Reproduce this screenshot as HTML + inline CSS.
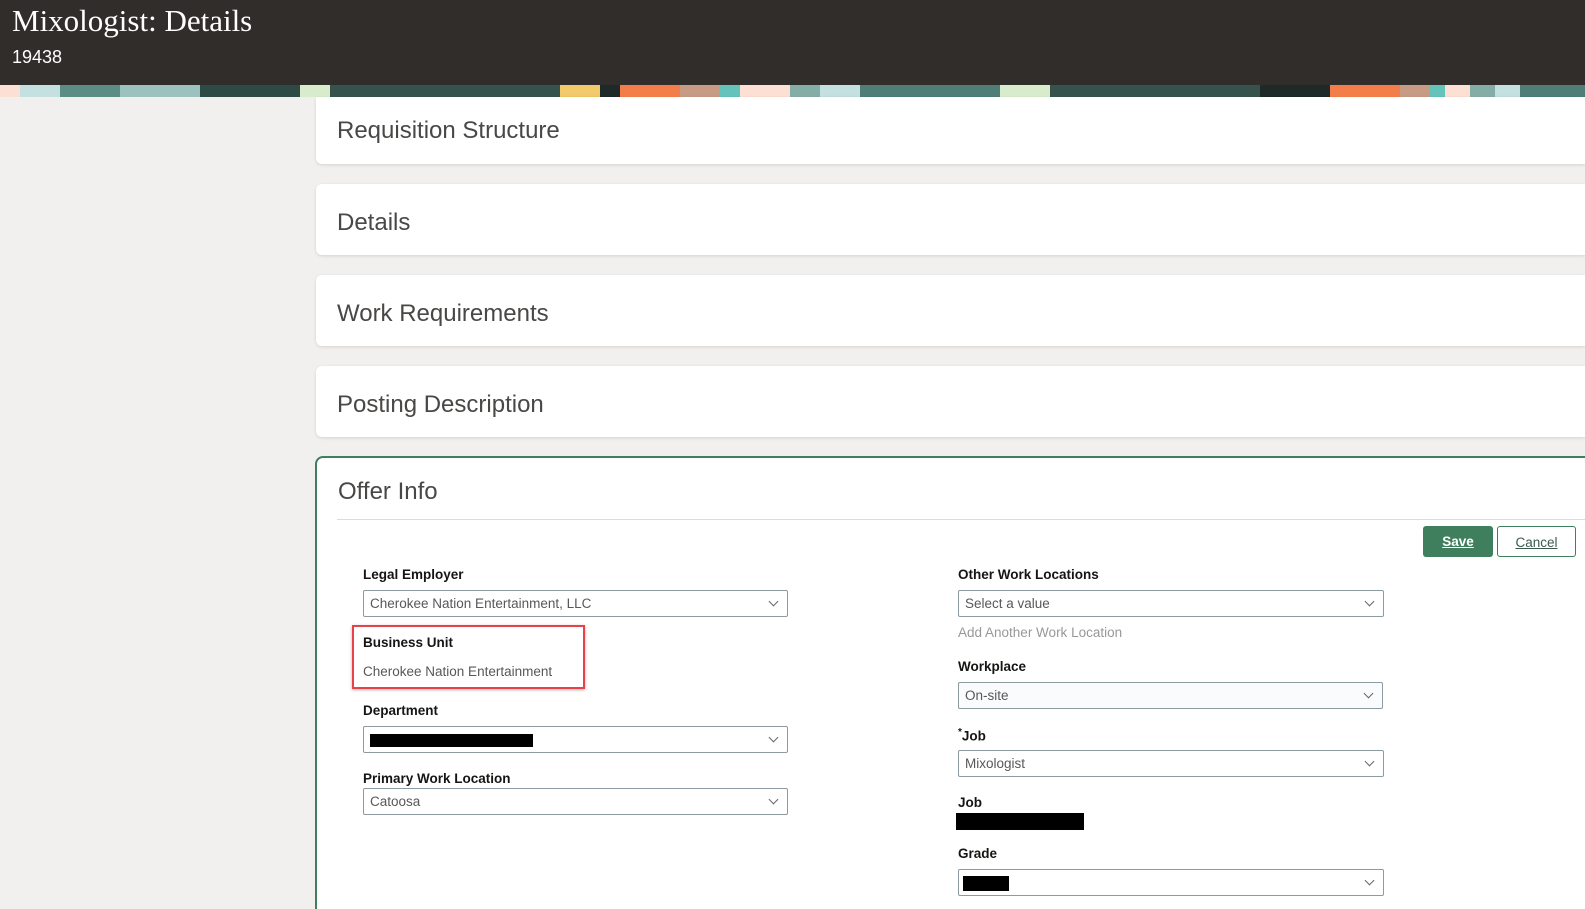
<!DOCTYPE html>
<html><head><meta charset="utf-8"><style>
*{margin:0;padding:0;box-sizing:border-box}
html,body{width:1585px;height:909px;overflow:hidden}
body{background:#f2f0ee;font-family:"Liberation Sans",sans-serif;position:relative}
.hdr{position:absolute;left:0;top:0;width:1585px;height:85px;background:#312d2a;color:#fff}
.hdr h1{position:absolute;left:12px;top:3px;font-family:"Liberation Serif",serif;font-weight:normal;font-size:31px}
.hdr .n{position:absolute;left:12px;top:47px;font-size:18px}
.ban{position:absolute;left:0;top:85px;width:1585px;height:12px;background:linear-gradient(90deg,#fde0d4 0 20px,#c4e0e0 20px 60px,#5b8d86 60px 120px,#9cc2c0 120px 200px,#2d4a44 200px 300px,#d8eccd 300px 330px,#35534c 330px 560px,#f2c96b 560px 600px,#1d2a27 600px 620px,#f47e4a 620px 680px,#c89c84 680px 720px,#64c4bb 720px 740px,#fde0d4 740px 790px,#85ada8 790px 820px,#c4e0e0 820px 860px,#4e7e77 860px 1000px,#d8eccd 1000px 1050px,#35534c 1050px 1260px,#1d2a27 1260px 1330px,#f47e4a 1330px 1400px,#c89c84 1400px 1430px,#64c4bb 1430px 1445px,#fde0d4 1445px 1470px,#85ada8 1470px 1495px,#c4e0e0 1495px 1520px,#4e7e77 1520px 1585px)}
.card{position:absolute;left:316px;width:1269px;background:#fff;box-shadow:0 1px 3px rgba(0,0,0,.12);border-radius:6px 0 0 6px}
.card span{position:absolute;left:21px;font-size:24px;color:#4a4846}
.offer{position:absolute;left:315px;top:456px;width:1270px;height:453px;background:#fff;border:2px solid #3f7f5e;border-right:none;border-bottom:none;border-radius:8px 0 0 0}
.sep{position:absolute;left:337px;top:519px;width:1248px;height:1px;background:#d6dde2}
.lbl{position:absolute;font-size:13.5px;color:#161513;font-weight:bold}
.in{position:absolute;height:27px;border:1px solid #8d9aa2;border-radius:2px;background:#fff;font-size:13.5px;color:#5a5856;padding:5px 6px}
.in::after{content:"";position:absolute;right:10px;top:7px;width:6px;height:6px;border-right:1px solid #666;border-bottom:1px solid #666;transform:rotate(45deg)}
.blk{display:inline-block;background:#000}
.btn{position:absolute;top:526px;height:31px;font-size:13.5px;font-weight:bold;text-align:center;line-height:31px;border-radius:3px;text-decoration:underline}
</style></head><body>
<div class="hdr"><h1>Mixologist: Details</h1><div class="n">19438</div></div>
<div class="ban"></div>
<div class="card" style="top:97px;height:67px;border-radius:0 0 0 6px"><span style="top:20px">Requisition Structure</span></div>
<div class="card" style="top:184px;height:71px"><span style="top:25px">Details</span></div>
<div class="card" style="top:275px;height:71px"><span style="top:25px">Work Requirements</span></div>
<div class="card" style="top:366px;height:71px"><span style="top:25px">Posting Description</span></div>
<div class="offer"></div>
<div style="position:absolute;left:338px;top:478px;font-size:24px;color:#4a4846">Offer Info</div>
<div class="sep"></div>
<div class="btn" style="left:1423px;width:70px;background:#3f7f5e;color:#fff">Save</div>
<div class="btn" style="left:1497px;width:79px;border:1px solid #3f7f5e;color:#3a5a50;font-weight:normal">Cancel</div>

<div class="lbl" style="left:363px;top:567px">Legal Employer</div>
<div class="in" style="left:363px;top:590px;width:425px">Cherokee Nation Entertainment, LLC</div>
<div style="position:absolute;left:352px;top:625px;width:233px;height:64px;border:2px solid #e8414a;box-shadow:0 1px 3px rgba(0,0,0,.3)"></div>
<div class="lbl" style="left:363px;top:635px">Business Unit</div>
<div style="position:absolute;left:363px;top:664px;font-size:13.5px;color:#5a5856">Cherokee Nation Entertainment</div>
<div class="lbl" style="left:363px;top:703px">Department</div>
<div class="in" style="left:363px;top:726px;width:425px"><span class="blk" style="width:163px;height:13px;margin-top:2px"></span></div>
<div class="lbl" style="left:363px;top:771px">Primary Work Location</div>
<div class="in" style="left:363px;top:788px;width:425px">Catoosa</div>

<div class="lbl" style="left:958px;top:567px">Other Work Locations</div>
<div class="in" style="left:958px;top:590px;width:426px">Select a value</div>
<div style="position:absolute;left:958px;top:625px;font-size:13.5px;color:#9a9896">Add Another Work Location</div>
<div class="lbl" style="left:958px;top:659px">Workplace</div>
<div class="in" style="left:958px;top:682px;width:425px;background:#fafbfd">On-site</div>
<div class="lbl" style="left:958px;top:727px"><sup style="font-size:10px">*</sup>Job</div>
<div class="in" style="left:958px;top:750px;width:426px">Mixologist</div>
<div class="lbl" style="left:958px;top:795px">Job</div>
<div style="position:absolute;left:956px;top:813px;width:128px;height:17px;background:#000"></div>
<div class="lbl" style="left:958px;top:846px">Grade</div>
<div class="in" style="left:958px;top:869px;width:426px"><span class="blk" style="width:46px;height:15px;margin-top:1px;margin-left:-2px"></span></div>
</body></html>
